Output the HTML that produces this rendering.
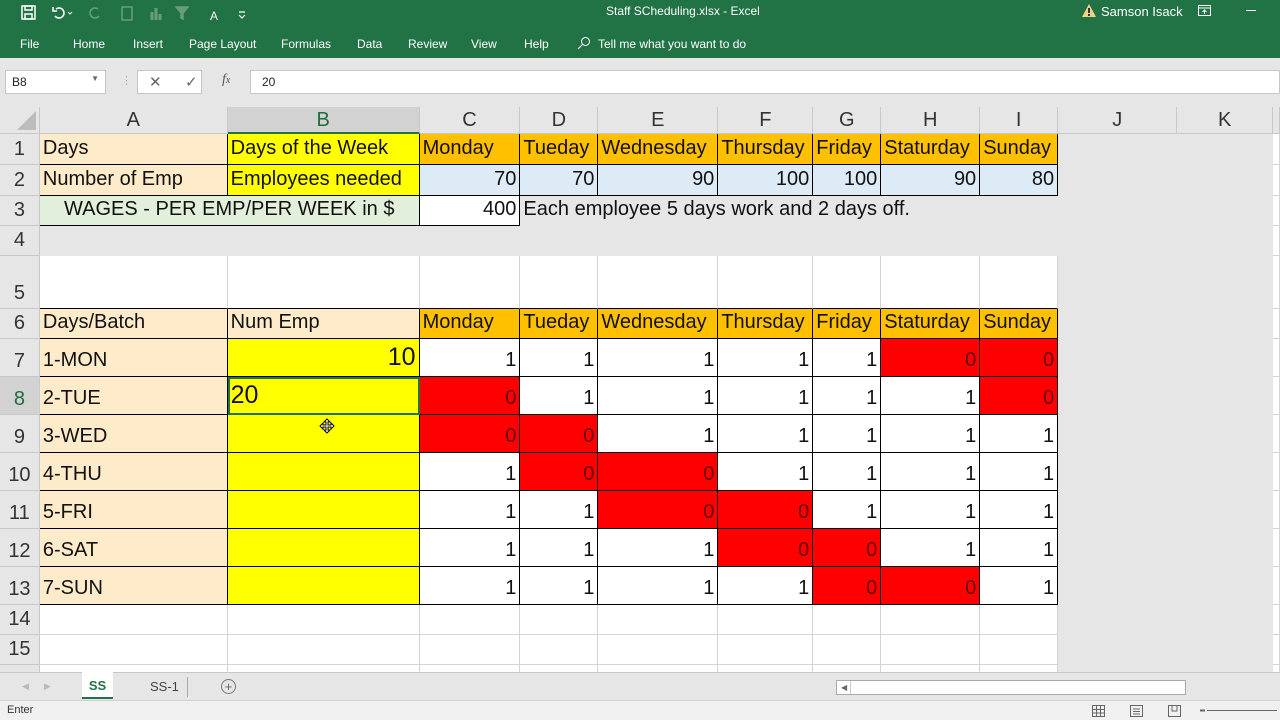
<!DOCTYPE html>
<html><head><meta charset="utf-8"><style>
*{box-sizing:border-box;margin:0;padding:0}
body{width:1280px;height:720px;overflow:hidden;background:#e6e6e6;font-family:"Liberation Sans",sans-serif;position:relative}
.abs{position:absolute}
.w{color:#fff;font-size:12px}
table{position:absolute;left:0;top:107px;border-collapse:separate;border-spacing:0;table-layout:fixed}
td{border-right:1px solid #d4d4d4;border-bottom:1px solid #d4d4d4;font-size:20px;color:#111;white-space:nowrap;overflow:visible;vertical-align:bottom;padding:0 3px 4px 3px;background:#fff}
td.h{background:#e6e6e6;color:#333;text-align:center;vertical-align:middle;padding:0;border-color:#c8c8c8;height:27px;line-height:20px}
td.rh{background:#e6e6e6;color:#333;text-align:center;font-size:20px;padding:0 0 3px 0;border-color:#c8c8c8}
td.g{background:#e6e6e6;border-color:#e6e6e6}
.bk{border-right:1px solid #000;border-bottom:1px solid #000}
.pe{background:#fdebc9}.ye{background:#ffff00}.or{background:#ffc000}.bl{background:#ddebf7}.gr{background:#e2efda}.re{background:#ff0000;color:#600}
.r{text-align:right}
</style></head><body>
<div class="abs" style="left:0;top:0;width:1280px;height:58px;background:#217346"></div>
<svg class="abs" style="left:20px;top:4px" width="240" height="18" viewBox="0 0 240 18" fill="none" stroke="#fff" stroke-width="1.5">
<rect x="2" y="2" width="13" height="13"/><rect x="5" y="2" width="7" height="4"/><rect x="5" y="10" width="7" height="5"/>
<path d="M36 5 a5 5 0 1 1 -1 7 M33 3 v4 h4"/><path d="M48 8l2 2 2-2" stroke-width="1"/>
<path d="M78 5 a5 5 0 1 0 1 7" stroke="#6a9d80"/><rect x="102" y="3" width="10" height="13" stroke="#6a9d80"/>
<path d="M132 16V8M136 16V4M140 16V10" stroke="#6a9d80" stroke-width="3"/>
<path d="M156 3h12l-5 6v6l-2-1v-5z" stroke="#6a9d80" fill="#6a9d80"/>
<text x="190" y="16" fill="#fff" stroke="none" font-size="12" font-family="Liberation Sans">A</text>
<path d="M219 8h6M219 11l3 3 3-3" stroke-width="1.2"/></svg>
<div class="abs w" style="left:606px;top:4px">Staff SCheduling.xlsx  -  Excel</div>
<svg class="abs" style="left:1081px;top:3px" width="16" height="15"><path d="M8 1L15 14H1z" fill="#f2d28a"/><rect x="7" y="5" width="2" height="5" fill="#333"/><rect x="7" y="11" width="2" height="2" fill="#333"/></svg>
<div class="abs w" style="left:1101px;top:4px;font-size:13px">Samson Isack</div>
<svg class="abs" style="left:1197px;top:4px" width="16" height="13" stroke="#fff" fill="none"><rect x="1.5" y="1.5" width="12" height="10"/><path d="M1 4h13M7.5 10V6M5.5 8l2-2 2 2"/></svg>
<div class="abs" style="left:1246px;top:10px;width:10px;height:1px;background:#fff"></div>
<div class="abs w" style="left:20px;top:37px">File</div>
<div class="abs w" style="left:73px;top:37px">Home</div>
<div class="abs w" style="left:133px;top:37px">Insert</div>
<div class="abs w" style="left:189px;top:37px">Page Layout</div>
<div class="abs w" style="left:281px;top:37px">Formulas</div>
<div class="abs w" style="left:357px;top:37px">Data</div>
<div class="abs w" style="left:408px;top:37px">Review</div>
<div class="abs w" style="left:471px;top:37px">View</div>
<div class="abs w" style="left:524px;top:37px">Help</div>
<svg class="abs" style="left:577px;top:36px" width="14" height="14" stroke="#fff" fill="none"><circle cx="8.5" cy="5.5" r="4"/><path d="M6 8L1 13"/></svg>
<div class="abs w" style="left:598px;top:37px">Tell me what you want to do</div>
<div class="abs" style="left:5px;top:70px;width:101px;height:24px;background:#fff;border:1px solid #c6c6c6;font-size:12px;padding:4px 0 0 6px;color:#222">B8<span style="position:absolute;right:6px;top:3px;font-size:8px;color:#666">▼</span></div>
<div class="abs" style="left:121px;top:74px;color:#aaa;font-size:11px">⋮</div>
<div class="abs" style="left:137px;top:70px;width:65px;height:24px;background:#fff;border:1px solid #c6c6c6"></div>
<div class="abs" style="left:149px;top:73px;color:#666;font-size:15px">✕</div>
<div class="abs" style="left:185px;top:73px;color:#666;font-size:15px">✓</div>
<div class="abs" style="left:222px;top:72px;color:#555;font-size:14px;font-family:'Liberation Serif';font-style:italic">f<span style="font-size:10px">x</span></div>
<div class="abs" style="left:250px;top:70px;width:1030px;height:24px;background:#fff;border:1px solid #c6c6c6;font-size:12px;padding:4px 0 0 11px;color:#222">20</div>
<table>
<colgroup><col style="width:40px"><col style="width:188px"><col style="width:192px"><col style="width:101px"><col style="width:78px"><col style="width:120px"><col style="width:95px"><col style="width:68px"><col style="width:99px"><col style="width:78px"><col style="width:120px"><col style="width:96px"><col style="width:5px"></colgroup>
<tr style="height:27px"><td class="h" style="position:relative"><svg width="20" height="20" style="position:absolute;left:17px;top:4px"><path d="M19 0V19H0z" fill="#bcbcbc"/></svg></td><td class="h">A</td><td class="h" style="background:#d2d2d2;color:#1e6b3f;border-bottom:2px solid #217346">B</td><td class="h">C</td><td class="h">D</td><td class="h">E</td><td class="h">F</td><td class="h">G</td><td class="h">H</td><td class="h">I</td><td class="h">J</td><td class="h">K</td><td class="h"></td></tr>
<tr style="height:31px"><td class="rh">1</td><td class="pe bk">Days</td><td class="ye bk">Days of the Week</td><td class="or bk">Monday</td><td class="or bk">Tueday</td><td class="or bk">Wednesday</td><td class="or bk">Thursday</td><td class="or bk">Friday</td><td class="or bk">Staturday</td><td class="or bk">Sunday</td><td class="g"></td><td class="g"></td><td></td></tr>
<tr style="height:31px"><td class="rh">2</td><td class="pe bk">Number of Emp</td><td class="ye bk">Employees needed</td><td class="bl bk r">70</td><td class="bl bk r">70</td><td class="bl bk r">90</td><td class="bl bk r">100</td><td class="bl bk r">100</td><td class="bl bk r">90</td><td class="bl bk r">80</td><td class="g"></td><td class="g"></td><td></td></tr>
<tr style="height:30px"><td class="rh">3</td><td class="gr bk" colspan="2" style="text-align:center">WAGES - PER EMP/PER WEEK in $</td><td class="bk r">400</td><td class="g" colspan="6" style="border-color:#e6e6e6">Each employee 5 days work and 2 days off.</td><td class="g"></td><td class="g"></td><td></td></tr>
<tr style="height:30px"><td class="rh">4</td><td class="g"></td><td class="g"></td><td class="g"></td><td class="g"></td><td class="g"></td><td class="g"></td><td class="g"></td><td class="g"></td><td class="g"></td><td class="g"></td><td class="g"></td><td></td></tr>
<tr style="height:53px"><td class="rh">5</td><td class="bk" style="border-right-color:#d4d4d4"></td><td class="bk" style="border-right-color:#d4d4d4"></td><td class="bk" style="border-right-color:#d4d4d4"></td><td class="bk" style="border-right-color:#d4d4d4"></td><td class="bk" style="border-right-color:#d4d4d4"></td><td class="bk" style="border-right-color:#d4d4d4"></td><td class="bk" style="border-right-color:#d4d4d4"></td><td class="bk" style="border-right-color:#d4d4d4"></td><td class="bk" style="border-right-color:#d4d4d4"></td><td class="g"></td><td class="g"></td><td></td></tr>
<tr style="height:30px"><td class="rh">6</td><td class="pe bk">Days/Batch</td><td class="pe bk">Num Emp</td><td class="or bk">Monday</td><td class="or bk">Tueday</td><td class="or bk">Wednesday</td><td class="or bk">Thursday</td><td class="or bk">Friday</td><td class="or bk">Staturday</td><td class="or bk">Sunday</td><td class="g"></td><td class="g"></td><td></td></tr>
<tr style="height:38px"><td class="rh">7</td><td class="pe bk">1-MON</td><td class="ye bk r" style="font-size:25px">10</td><td class="bk r">1</td><td class="bk r">1</td><td class="bk r">1</td><td class="bk r">1</td><td class="bk r">1</td><td class="re bk r">0</td><td class="re bk r">0</td><td class="g"></td><td class="g"></td><td></td></tr>
<tr style="height:38px"><td class="rh" style="background:#d2d2d2;color:#1e6b3f">8</td><td class="pe bk">2-TUE</td><td class="bk" style="font-size:25px;background:#ffff00;outline:2px solid #217346;outline-offset:-2px">20</td><td class="re bk r">0</td><td class="bk r">1</td><td class="bk r">1</td><td class="bk r">1</td><td class="bk r">1</td><td class="bk r">1</td><td class="re bk r">0</td><td class="g"></td><td class="g"></td><td></td></tr>
<tr style="height:38px"><td class="rh">9</td><td class="pe bk">3-WED</td><td class="ye bk"></td><td class="re bk r">0</td><td class="re bk r">0</td><td class="bk r">1</td><td class="bk r">1</td><td class="bk r">1</td><td class="bk r">1</td><td class="bk r">1</td><td class="g"></td><td class="g"></td><td></td></tr>
<tr style="height:38px"><td class="rh">10</td><td class="pe bk">4-THU</td><td class="ye bk"></td><td class="bk r">1</td><td class="re bk r">0</td><td class="re bk r">0</td><td class="bk r">1</td><td class="bk r">1</td><td class="bk r">1</td><td class="bk r">1</td><td class="g"></td><td class="g"></td><td></td></tr>
<tr style="height:38px"><td class="rh">11</td><td class="pe bk">5-FRI</td><td class="ye bk"></td><td class="bk r">1</td><td class="bk r">1</td><td class="re bk r">0</td><td class="re bk r">0</td><td class="bk r">1</td><td class="bk r">1</td><td class="bk r">1</td><td class="g"></td><td class="g"></td><td></td></tr>
<tr style="height:38px"><td class="rh">12</td><td class="pe bk">6-SAT</td><td class="ye bk"></td><td class="bk r">1</td><td class="bk r">1</td><td class="bk r">1</td><td class="re bk r">0</td><td class="re bk r">0</td><td class="bk r">1</td><td class="bk r">1</td><td class="g"></td><td class="g"></td><td></td></tr>
<tr style="height:38px"><td class="rh">13</td><td class="pe bk">7-SUN</td><td class="ye bk"></td><td class="bk r">1</td><td class="bk r">1</td><td class="bk r">1</td><td class="bk r">1</td><td class="re bk r">0</td><td class="re bk r">0</td><td class="bk r">1</td><td class="g"></td><td class="g"></td><td></td></tr>
<tr style="height:30px"><td class="rh">14</td><td></td><td></td><td></td><td></td><td></td><td></td><td></td><td></td><td></td><td class="g"></td><td class="g"></td><td></td></tr>
<tr style="height:30px"><td class="rh">15</td><td></td><td></td><td></td><td></td><td></td><td></td><td></td><td></td><td></td><td class="g"></td><td class="g"></td><td></td></tr>
<tr style="height:10px"><td class="rh"></td><td></td><td></td><td></td><td></td><td></td><td></td><td></td><td></td><td></td><td class="g"></td><td class="g"></td><td></td></tr>
</table>
<svg class="abs" style="left:319px;top:418px" width="16" height="16" fill="#fff" stroke="#000"><path d="M8 1l3 3H9v3h3V5l3 3-3 3V9H9v3h2l-3 3-3-3h2V9H4v2L1 8l3-3v2h3V4H5z"/></svg>
<div class="abs" style="left:0;top:672px;width:1280px;height:28px;background:#e6e6e6;border-top:1px solid #c6c6c6"></div>
<div class="abs" style="left:22px;top:681px;color:#bbb;font-size:9px">◀&nbsp;&nbsp;&nbsp;&nbsp;&nbsp;&nbsp;▶</div>
<div class="abs" style="left:82px;top:672px;width:31px;height:27px;background:#fff;border-bottom:2px solid #217346;color:#217346;font-weight:bold;font-size:13px;text-align:center;padding-top:6px">SS</div>
<div class="abs" style="left:150px;top:679px;color:#444;font-size:13px">SS-1</div>
<div class="abs" style="left:187px;top:677px;width:1px;height:20px;background:#aaa"></div>
<div class="abs" style="left:221px;top:679px;width:15px;height:15px;border:1px solid #777;border-radius:50%;text-align:center;font-size:13px;line-height:13px;color:#666">+</div>
<div class="abs" style="left:836px;top:680px;width:350px;height:15px;background:#fff;border:1px solid #aaa"></div>
<div class="abs" style="left:837px;top:681px;width:14px;height:13px;border-right:1px solid #ccc;font-size:8px;color:#666;padding:2px 0 0 4px">◀</div>
<div class="abs" style="left:0;top:700px;width:1280px;height:20px;background:#f0f0f0;border-top:1px solid #d0d0d0"></div>
<div class="abs" style="left:7px;top:704px;color:#333;font-size:11px">Enter</div>
<svg class="abs" style="left:1090px;top:703px" width="190" height="15" fill="none" stroke="#666"><rect x="2.5" y="2.5" width="12" height="11"/><path d="M2 6.5h13M2 10h13M6.5 2v12M10.5 2v12"/><rect x="40.5" y="2.5" width="12" height="11"/><path d="M43 6h7M43 8.5h7M43 11h7"/><rect x="78.5" y="2.5" width="12" height="11"/><path d="M82 2v6h5V2"/><path d="M110 7.5h5" stroke-width="2"/><path d="M117 7.5h70"/></svg>
</body></html>
